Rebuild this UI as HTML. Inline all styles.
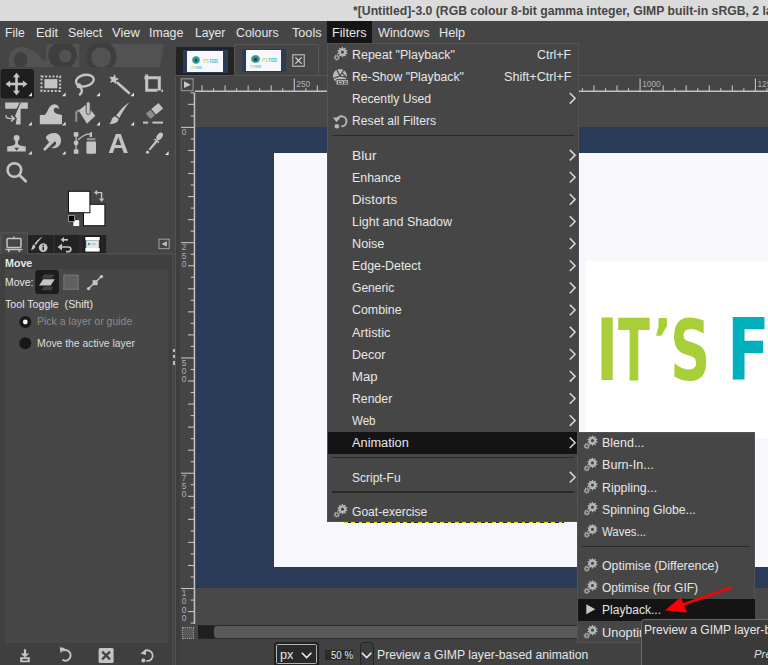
<!DOCTYPE html>
<html><head><meta charset="utf-8"><title>GIMP</title>
<style>
*{box-sizing:border-box;margin:0;padding:0}
html,body{width:768px;height:665px;overflow:hidden;background:#454545}
body{position:relative;font-family:"Liberation Sans","DejaVu Sans",sans-serif;font-size:12.3px;color:#e6e6e6}
.a{position:absolute}
.t{position:absolute;white-space:pre;transform-origin:0 50%}
.t.r{transform-origin:100% 50%}
svg{position:absolute;overflow:visible}
.rl{position:absolute;font-size:8.3px;line-height:8px;color:#adb0b4;white-space:nowrap}
</style></head><body>

<div class="a" style="left:176px;top:44px;width:592px;height:621px;background:#454545;"></div>
<div class="a" style="left:195px;top:92px;width:573px;height:534px;background:#484848;"></div>
<div class="a" style="left:176.3px;top:639px;width:592px;height:26px;background:#414141;"></div>
<div class="a" style="left:194px;top:127.4px;width:574px;height:461px;background:#2b3c59;"></div>
<div class="a" style="left:274px;top:153.3px;width:494px;height:414px;background:#f7f7fc;"></div>
<div class="a" style="left:585.5px;top:261px;width:183px;height:177px;background:#ffffff;"></div>
<div class="a" style="left:344px;top:521.6px;width:220px;height:1.6px;background:repeating-linear-gradient(90deg,#e8e000 0 3.7px,#222 3.7px 7.4px)"></div>
<div class="a" style="left:176px;top:47px;width:58.5px;height:28.5px;background:#232323;"></div>
<div class="a" style="left:234px;top:44px;width:85px;height:32px;background:#454545;border:1px solid #575757;border-bottom:none"></div>
<div class="a" style="left:176px;top:75.3px;width:592px;height:1px;background:#555555;"></div>
<div class="a" style="left:182.5px;top:50px;width:45px;height:23px;background:#2b3c59;"></div>
<div class="a" style="left:187.0px;top:50.8px;width:36px;height:21.2px;background:#f8f8fc;"></div>
<div class="a" style="left:191.9px;top:56.1px;width:8.4px;height:8.4px;border-radius:50%;background:#2e8f9a;border:1.8px solid #57b58b"></div>
<div class="a" style="left:195.1px;top:59.3px;width:2.2px;height:2.6px;border-radius:40%;background:#2a3f5a"></div>
<div class="a" style="left:202.8px;top:56.6px;font-size:5.6px;line-height:8px;height:8px;font-weight:bold;color:#a9cf38;white-space:nowrap;transform-origin:0 0;transform:scaleX(.51);letter-spacing:.3px">IT’S <span style="color:#19b5c0">FOSS</span></div>
<div class="a" style="left:190.7px;top:64.9px;font-size:4.4px;line-height:6px;height:6px;font-weight:bold;color:#a9cf38;white-space:nowrap;transform-origin:0 0;transform:scaleX(.46);letter-spacing:.3px">IT’S <span style="color:#19b5c0">FOSS</span></div>
<div class="a" style="left:241.8px;top:49px;width:44px;height:22.8px;background:#2b3c59;"></div>
<div class="a" style="left:246.3px;top:49.8px;width:35px;height:21.0px;background:#f8f8fc;"></div>
<div class="a" style="left:251.20000000000002px;top:55.1px;width:8.4px;height:8.4px;border-radius:50%;background:#2e8f9a;border:1.8px solid #57b58b"></div>
<div class="a" style="left:254.4px;top:58.3px;width:2.2px;height:2.6px;border-radius:40%;background:#2a3f5a"></div>
<div class="a" style="left:262.1px;top:55.6px;font-size:5.6px;line-height:8px;height:8px;font-weight:bold;color:#a9cf38;white-space:nowrap;transform-origin:0 0;transform:scaleX(.51);letter-spacing:.3px">IT’S <span style="color:#19b5c0">FOSS</span></div>
<div class="a" style="left:250.0px;top:63.9px;font-size:4.4px;line-height:6px;height:6px;font-weight:bold;color:#a9cf38;white-space:nowrap;transform-origin:0 0;transform:scaleX(.46);letter-spacing:.3px">IT’S <span style="color:#19b5c0">FOSS</span></div>
<svg style="left:292px;top:54px" width="13" height="13" viewBox="0 0 13 13"><rect x=".75" y=".75" width="11.5" height="11.5" fill="none" stroke="#b0b0b0" stroke-width="1.3"/><path d="M3.4 3.4L9.6 9.6M9.6 3.4L3.4 9.6" stroke="#d8d8d8" stroke-width="1.3"/></svg>
<svg style="left:0;top:0" width="768" height="665" viewBox="0 0 768 665"><rect x="195" y="90.5" width="573" height="1.5" fill="#c2c2c2"/><rect x="193.7" y="93" width="1.5" height="531" fill="#c2c2c2"/><rect x="201.48" y="85.4" width="1.1" height="5.6" fill="#c2c2c2"/><rect x="213.00" y="88.2" width="1.1" height="2.8" fill="#c2c2c2"/><rect x="224.53" y="85.4" width="1.1" height="5.6" fill="#c2c2c2"/><rect x="236.06" y="88.2" width="1.1" height="2.8" fill="#c2c2c2"/><rect x="247.59" y="85.4" width="1.1" height="5.6" fill="#c2c2c2"/><rect x="259.12" y="88.2" width="1.1" height="2.8" fill="#c2c2c2"/><rect x="270.64" y="85.4" width="1.1" height="5.6" fill="#c2c2c2"/><rect x="282.17" y="88.2" width="1.1" height="2.8" fill="#c2c2c2"/><rect x="293.70" y="78.5" width="1.1" height="12.5" fill="#c2c2c2"/><rect x="305.23" y="88.2" width="1.1" height="2.8" fill="#c2c2c2"/><rect x="316.76" y="85.4" width="1.1" height="5.6" fill="#c2c2c2"/><rect x="328.28" y="88.2" width="1.1" height="2.8" fill="#c2c2c2"/><rect x="339.81" y="85.4" width="1.1" height="5.6" fill="#c2c2c2"/><rect x="351.34" y="88.2" width="1.1" height="2.8" fill="#c2c2c2"/><rect x="362.87" y="85.4" width="1.1" height="5.6" fill="#c2c2c2"/><rect x="374.40" y="88.2" width="1.1" height="2.8" fill="#c2c2c2"/><rect x="385.92" y="85.4" width="1.1" height="5.6" fill="#c2c2c2"/><rect x="397.45" y="88.2" width="1.1" height="2.8" fill="#c2c2c2"/><rect x="408.98" y="78.5" width="1.1" height="12.5" fill="#c2c2c2"/><rect x="420.51" y="88.2" width="1.1" height="2.8" fill="#c2c2c2"/><rect x="432.04" y="85.4" width="1.1" height="5.6" fill="#c2c2c2"/><rect x="443.56" y="88.2" width="1.1" height="2.8" fill="#c2c2c2"/><rect x="455.09" y="85.4" width="1.1" height="5.6" fill="#c2c2c2"/><rect x="466.62" y="88.2" width="1.1" height="2.8" fill="#c2c2c2"/><rect x="478.15" y="85.4" width="1.1" height="5.6" fill="#c2c2c2"/><rect x="489.68" y="88.2" width="1.1" height="2.8" fill="#c2c2c2"/><rect x="501.20" y="85.4" width="1.1" height="5.6" fill="#c2c2c2"/><rect x="512.73" y="88.2" width="1.1" height="2.8" fill="#c2c2c2"/><rect x="524.26" y="78.5" width="1.1" height="12.5" fill="#c2c2c2"/><rect x="535.79" y="88.2" width="1.1" height="2.8" fill="#c2c2c2"/><rect x="547.32" y="85.4" width="1.1" height="5.6" fill="#c2c2c2"/><rect x="558.84" y="88.2" width="1.1" height="2.8" fill="#c2c2c2"/><rect x="570.37" y="85.4" width="1.1" height="5.6" fill="#c2c2c2"/><rect x="581.90" y="88.2" width="1.1" height="2.8" fill="#c2c2c2"/><rect x="593.43" y="85.4" width="1.1" height="5.6" fill="#c2c2c2"/><rect x="604.96" y="88.2" width="1.1" height="2.8" fill="#c2c2c2"/><rect x="616.48" y="85.4" width="1.1" height="5.6" fill="#c2c2c2"/><rect x="628.01" y="88.2" width="1.1" height="2.8" fill="#c2c2c2"/><rect x="639.54" y="78.5" width="1.1" height="12.5" fill="#c2c2c2"/><rect x="651.07" y="88.2" width="1.1" height="2.8" fill="#c2c2c2"/><rect x="662.60" y="85.4" width="1.1" height="5.6" fill="#c2c2c2"/><rect x="674.12" y="88.2" width="1.1" height="2.8" fill="#c2c2c2"/><rect x="685.65" y="85.4" width="1.1" height="5.6" fill="#c2c2c2"/><rect x="697.18" y="88.2" width="1.1" height="2.8" fill="#c2c2c2"/><rect x="708.71" y="85.4" width="1.1" height="5.6" fill="#c2c2c2"/><rect x="720.24" y="88.2" width="1.1" height="2.8" fill="#c2c2c2"/><rect x="731.76" y="85.4" width="1.1" height="5.6" fill="#c2c2c2"/><rect x="743.29" y="88.2" width="1.1" height="2.8" fill="#c2c2c2"/><rect x="754.82" y="78.5" width="1.1" height="12.5" fill="#c2c2c2"/><rect x="766.35" y="88.2" width="1.1" height="2.8" fill="#c2c2c2"/><rect x="190.7" y="92.27" width="3.8" height="1.1" fill="#c2c2c2"/><rect x="188" y="103.79" width="6.5" height="1.1" fill="#c2c2c2"/><rect x="190.7" y="115.32" width="3.8" height="1.1" fill="#c2c2c2"/><rect x="181" y="126.85" width="13.5" height="1.1" fill="#c2c2c2"/><rect x="190.7" y="138.38" width="3.8" height="1.1" fill="#c2c2c2"/><rect x="188" y="149.91" width="6.5" height="1.1" fill="#c2c2c2"/><rect x="190.7" y="161.43" width="3.8" height="1.1" fill="#c2c2c2"/><rect x="188" y="172.96" width="6.5" height="1.1" fill="#c2c2c2"/><rect x="190.7" y="184.49" width="3.8" height="1.1" fill="#c2c2c2"/><rect x="188" y="196.02" width="6.5" height="1.1" fill="#c2c2c2"/><rect x="190.7" y="207.55" width="3.8" height="1.1" fill="#c2c2c2"/><rect x="188" y="219.07" width="6.5" height="1.1" fill="#c2c2c2"/><rect x="190.7" y="230.60" width="3.8" height="1.1" fill="#c2c2c2"/><rect x="181" y="242.13" width="13.5" height="1.1" fill="#c2c2c2"/><rect x="190.7" y="253.66" width="3.8" height="1.1" fill="#c2c2c2"/><rect x="188" y="265.19" width="6.5" height="1.1" fill="#c2c2c2"/><rect x="190.7" y="276.71" width="3.8" height="1.1" fill="#c2c2c2"/><rect x="188" y="288.24" width="6.5" height="1.1" fill="#c2c2c2"/><rect x="190.7" y="299.77" width="3.8" height="1.1" fill="#c2c2c2"/><rect x="188" y="311.30" width="6.5" height="1.1" fill="#c2c2c2"/><rect x="190.7" y="322.83" width="3.8" height="1.1" fill="#c2c2c2"/><rect x="188" y="334.35" width="6.5" height="1.1" fill="#c2c2c2"/><rect x="190.7" y="345.88" width="3.8" height="1.1" fill="#c2c2c2"/><rect x="181" y="357.41" width="13.5" height="1.1" fill="#c2c2c2"/><rect x="190.7" y="368.94" width="3.8" height="1.1" fill="#c2c2c2"/><rect x="188" y="380.47" width="6.5" height="1.1" fill="#c2c2c2"/><rect x="190.7" y="391.99" width="3.8" height="1.1" fill="#c2c2c2"/><rect x="188" y="403.52" width="6.5" height="1.1" fill="#c2c2c2"/><rect x="190.7" y="415.05" width="3.8" height="1.1" fill="#c2c2c2"/><rect x="188" y="426.58" width="6.5" height="1.1" fill="#c2c2c2"/><rect x="190.7" y="438.11" width="3.8" height="1.1" fill="#c2c2c2"/><rect x="188" y="449.63" width="6.5" height="1.1" fill="#c2c2c2"/><rect x="190.7" y="461.16" width="3.8" height="1.1" fill="#c2c2c2"/><rect x="181" y="472.69" width="13.5" height="1.1" fill="#c2c2c2"/><rect x="190.7" y="484.22" width="3.8" height="1.1" fill="#c2c2c2"/><rect x="188" y="495.75" width="6.5" height="1.1" fill="#c2c2c2"/><rect x="190.7" y="507.27" width="3.8" height="1.1" fill="#c2c2c2"/><rect x="188" y="518.80" width="6.5" height="1.1" fill="#c2c2c2"/><rect x="190.7" y="530.33" width="3.8" height="1.1" fill="#c2c2c2"/><rect x="188" y="541.86" width="6.5" height="1.1" fill="#c2c2c2"/><rect x="190.7" y="553.39" width="3.8" height="1.1" fill="#c2c2c2"/><rect x="188" y="564.91" width="6.5" height="1.1" fill="#c2c2c2"/><rect x="190.7" y="576.44" width="3.8" height="1.1" fill="#c2c2c2"/><rect x="181" y="587.97" width="13.5" height="1.1" fill="#c2c2c2"/><rect x="190.7" y="599.50" width="3.8" height="1.1" fill="#c2c2c2"/><rect x="188" y="611.03" width="6.5" height="1.1" fill="#c2c2c2"/><rect x="190.7" y="622.55" width="3.8" height="1.1" fill="#c2c2c2"/><rect x="181.3" y="78.8" width="11.8" height="11.8" fill="none" stroke="#8c8c8c" stroke-width="1.2"/><path d="M184 81.3L190.8 84.7L184 88.1z" fill="#c8c8c8"/></svg>
<div class="rl" style="left:296.3px;top:80.2px">250</div>
<div class="rl" style="left:642.2px;top:80.2px">1000</div>
<div class="rl" style="left:757.5px;top:80.2px">125</div>
<div class="rl" style="left:181.8px;top:128.0px">0</div>
<div class="rl" style="left:181.8px;top:243.3px">2</div>
<div class="rl" style="left:181.8px;top:251.6px">5</div>
<div class="rl" style="left:181.8px;top:259.8px">0</div>
<div class="rl" style="left:181.8px;top:358.6px">5</div>
<div class="rl" style="left:181.8px;top:366.8px">0</div>
<div class="rl" style="left:181.8px;top:375.1px">0</div>
<div class="rl" style="left:181.8px;top:473.8px">7</div>
<div class="rl" style="left:181.8px;top:482.0px">5</div>
<div class="rl" style="left:181.8px;top:490.3px">0</div>
<div class="rl" style="left:181.8px;top:589.1px">1</div>
<div class="rl" style="left:181.8px;top:597.4px">0</div>
<div class="rl" style="left:181.8px;top:605.6px">0</div>
<div class="rl" style="left:181.8px;top:613.9px">0</div>
<div class="a" style="left:181.5px;top:626.5px;width:12.5px;height:12.5px;border:1px dotted #9a9a9a;background:#595959"></div>
<div class="a" style="left:197.5px;top:625.5px;width:571px;height:13px;background:#1f1f1f;"></div>
<div class="a" style="left:213.5px;top:626.3px;width:555px;height:11.7px;background:#595959;border-radius:3px 0 0 3px;"></div>
<div class="a" style="left:197.5px;top:625.3px;width:571px;height:1px;background:#2a2a2a;"></div>
<div class="a" style="left:197.5px;top:638px;width:571px;height:1px;background:#2a2a2a;"></div>
<div class="a" style="left:274.3px;top:642.3px;width:44.3px;height:26px;border-radius:3px;background:#222222"></div>
<div class="a" style="left:276.2px;top:643.9px;width:40.6px;height:20.2px;border:1px solid #b4b4b4;border-radius:1.5px;background:#2a2a2a"></div>
<div class="t" style="left:280px;top:647.00px;font-size:12.01px;line-height:16px;height:16px;transform:scaleX(1.0600);">px</div>
<svg style="left:301.2px;top:652.2px" width="12" height="7" viewBox="0 0 12 7"><path d="M0.8 0.8L5.6 5.6L10.4 0.8" fill="none" stroke="#ececec" stroke-width="1.6"/></svg>
<div class="a" style="left:319px;top:642.5px;width:40px;height:22.5px;background:#404040;"></div>
<div class="a" style="left:325.3px;top:649.6px;width:27.8px;height:10.6px;background:#2b2b2b;"></div>
<div class="t" style="left:331px;top:649.00px;font-size:10.04px;line-height:13px;height:13px;transform:scaleX(0.9614);">50 %</div>
<div class="a" style="left:359.6px;top:642.3px;width:14.8px;height:26px;border:1px solid #262626;border-radius:3px;background:#3c3c3c"></div>
<svg style="left:361.4px;top:652.2px" width="12" height="7" viewBox="0 0 12 7"><path d="M0.8 0.8L5.6 5.6L10.4 0.8" fill="none" stroke="#ececec" stroke-width="1.6"/></svg>
<div class="t" style="left:377px;top:647.00px;font-size:12.01px;line-height:16px;height:16px;transform:scaleX(1.0166);">Preview a GIMP layer-based animation</div>
<div class="a" style="left:0px;top:44px;width:173px;height:621px;background:#454545;"></div>
<div class="a" style="left:175.4px;top:76px;width:0.9px;height:589px;background:#535353;"></div>
<div class="a" style="left:176.3px;top:76px;width:3.6px;height:589px;background:#3e3e3e;"></div>
<div class="a" style="left:172.2px;top:254px;width:0.8px;height:411px;background:#505050;"></div>
<div class="a" style="left:173.1px;top:349px;width:2.1px;height:3.2px;background:#bdbdbd;"></div>
<div class="a" style="left:173.1px;top:355.2px;width:2.1px;height:3.2px;background:#bdbdbd;"></div>
<div class="a" style="left:173.1px;top:361.4px;width:2.1px;height:3.2px;background:#bdbdbd;"></div>
<svg style="left:0;top:0" width="176" height="665" viewBox="0 0 176 665">
<defs><clipPath id="wc"><rect x="0" y="43.4" width="176" height="23.5"/></clipPath></defs>
<g clip-path="url(#wc)">
<path d="M8.9 67V60C8.9 52 14.5 46.9 21.5 46.9C27 46.9 31.5 49.6 35.5 53C39.5 56.4 42.5 59.3 45.8 61.2L46.4 43.4H79.6C79.2 51 79.2 59 79.8 67z" fill="#525252"/>
<ellipse cx="20.6" cy="60" rx="6.9" ry="8" fill="#404040"/>
<ellipse cx="62.6" cy="55.3" rx="14.3" ry="13.6" fill="#3e3e3e"/>
<circle cx="65.3" cy="56" r="6.3" fill="#525252"/>
<path d="M111 43.4H163.8L160 67H111z" fill="#525252"/>
<circle cx="101.25" cy="56.6" r="15.2" fill="#3e3e3e"/>
<circle cx="101.25" cy="57.3" r="10" fill="#525252"/>
</g>
<rect x="0.6" y="69" width="33.4" height="29.6" rx="3.2" fill="#1e1e1e"/>
<path d="M32.0 92.6L32.0 96.19999999999999L28.4 96.19999999999999z" fill="#e4e4e4"/>
<path d="M65.6 92.6L65.6 96.19999999999999L62 96.19999999999999z" fill="#e4e4e4"/>
<path d="M100.0 92.6L100.0 96.19999999999999L96.4 96.19999999999999z" fill="#e4e4e4"/>
<path d="M134.0 92.6L134.0 96.19999999999999L130.4 96.19999999999999z" fill="#e4e4e4"/>
<path d="M31.8 121.8L31.8 125.39999999999999L28.2 125.39999999999999z" fill="#e4e4e4"/>
<path d="M65.6 121.8L65.6 125.39999999999999L62 125.39999999999999z" fill="#e4e4e4"/>
<path d="M100.0 121.8L100.0 125.39999999999999L96.4 125.39999999999999z" fill="#e4e4e4"/>
<path d="M134.2 121.8L134.2 125.39999999999999L130.6 125.39999999999999z" fill="#e4e4e4"/>
<path d="M31.8 151L31.8 154.6L28.2 154.6z" fill="#e4e4e4"/>
<path d="M65.6 151L65.6 154.6L62 154.6z" fill="#e4e4e4"/>
<path d="M168.6 151.3L168.6 154.9L165 154.9z" fill="#e4e4e4"/>
<g fill="#c4c4c4"><rect x="9.0" y="82.7" width="15" height="2.6"/><rect x="15.2" y="76.5" width="2.6" height="15"/>
<path d="M5.5 84l4.6 -3.6v7.2z M27.5 84l-4.6 -3.6v7.2z M16.5 72.7l-3.6 4.6h7.2z M16.5 95.3l-3.6 -4.6h7.2z"/></g>
<rect x="41.5" y="76.4" width="18.6" height="14.6" fill="none" stroke="#c4c4c4" stroke-width="2" stroke-dasharray="2 1.66"/>
<rect x="44.4" y="79.1" width="13" height="9.2" fill="#c4c4c4"/>
<g fill="none" stroke="#c4c4c4" stroke-width="2.4" stroke-linecap="round"><ellipse cx="84.9" cy="80.6" rx="9" ry="5.7" transform="rotate(-12 84.9 80.6)"/><path d="M79.5 86.6C82.6 88.2 82.6 92.6 80 94.5"/></g><circle cx="79" cy="85.8" r="2.5" fill="#c4c4c4"/>
<path d="M117.4 82.8L129 93" stroke="#c4c4c4" stroke-width="2.6" stroke-linecap="round"/>
<polygon points="115.00,74.22 115.76,77.73 119.17,78.85 116.07,80.65 116.06,84.24 113.38,81.85 109.96,82.95 111.41,79.66 109.31,76.75 112.88,77.12" fill="#c4c4c4"/>
<g fill="none" stroke="#c4c4c4" stroke-width="3"><path d="M146.7 74.4V90.2H157.6"/><path d="M144.4 77.8H159.3V90.6"/></g><rect x="161.4" y="89.6" width="1.6" height="2.4" fill="#c4c4c4"/>
<g fill="#c4c4c4"><path d="M5.2 102.4H27.8V108.8H20.6V124.6H15.2L16 117.5L14.6 116L19.6 103.5L16.5 108.8H5.2z"/></g>
<path d="M20.2 102.4L14.3 116.2L16.2 118.3L15 124.8" fill="none" stroke="#454545" stroke-width="1.1"/>
<path d="M6 115.2C6 118.6 7.5 118.6 13.5 118.6M11.2 115.6L14.2 118.6L11.2 121.6" fill="none" stroke="#c4c4c4" stroke-width="1.4"/>
<path d="M39.8 124.2V115H44.5C47.5 114 48.5 104.3 54.2 104.3C58 104.3 59.3 107.2 59 109.6C58.2 108.3 57 107.6 55.6 107.8C53.6 108.2 53.2 110.6 54.5 112.2C55.8 113.8 59 114.3 62 115V124.2z" fill="#c4c4c4"/>
<path d="M76.2 121.8V113.6C76.2 111.6 78 110.6 79.6 110.3" fill="none" stroke="#8c8c8c" stroke-width="2.2"/>
<path d="M78.6 110.6L86.2 104.4L95.4 115.8L87 123.8z" fill="#c4c4c4"/>
<rect x="86.2" y="101.8" width="4" height="12.6" rx="2" fill="#c4c4c4" stroke="#454545" stroke-width="0.9"/>
<path d="M129.2 102.4C126.4 106 121.4 113.4 119.4 118L116.2 115.6C118.8 111.4 125 104.6 129.2 102.4z" fill="#c4c4c4"/>
<path d="M115.4 116.4L118.6 118.8C118.6 122.4 114.2 124.6 109 123.8C111.6 122.6 111.2 119.8 112.4 118C113.2 116.8 114.4 116.3 115.4 116.4z" fill="#c4c4c4"/>
<rect x="-5.2" y="-3.6" width="9.4" height="7.2" transform="translate(157.6 108.4) rotate(-40)" fill="#c4c4c4"/>
<rect x="-3" y="-3.6" width="6" height="7.2" transform="translate(150.4 114.4) rotate(-40)" fill="#8c8c8c"/>
<rect x="143" y="121.6" width="5.2" height="2" fill="#c4c4c4"/><rect x="152.4" y="121.6" width="10.6" height="2" fill="#c4c4c4"/>
<circle cx="16.6" cy="138" r="3" fill="#c4c4c4"/><path d="M15.2 139.5H18V143.5C18 145 21 146 25.8 146.6V151.6H7.2V146.6C12 146 15.2 145 15.2 143.5z" fill="#c4c4c4"/><path d="M14.2 147.8H19L16.6 150.8z" fill="#454545"/>
<path d="M46.2 136.6C48 133.8 51.6 132.6 55 133C59 133.6 61.4 137 61 141.2C60.6 145 57.6 148.2 54 148.2C52.6 148.2 51.6 147.4 51.6 147.4C53.6 147.2 55.6 145.6 56 143.6C56.3 142 55.2 141.2 54.4 141.8L45.4 150.4C44.4 151.2 42.8 149.8 43.6 148.6L49.6 141.8C48 141.8 47.4 140.8 47.6 139.8C46.4 139.4 45.6 138 46.2 136.6z" fill="#c4c4c4"/>
<g fill="#c4c4c4"><rect x="73.8" y="132.2" width="4.6" height="4.4"/><rect x="73.8" y="149.4" width="4.6" height="4.4"/><circle cx="76.1" cy="143" r="2.4"/><rect x="75.5" y="134" width="1.2" height="17"/>
<path d="M77.5 139.6C81 136 85 133.4 90 133.2V132.2H92V137H89.6V134.6C85.6 134.6 82 137 78.4 140.6z"/>
<rect x="86.4" y="141.4" width="9.6" height="12.4" rx="1"/><rect x="87" y="138" width="8.4" height="2.4" fill="#8c8c8c"/></g>
<g fill="#c4c4c4"><ellipse cx="159.6" cy="136.4" rx="2.6" ry="4.2" transform="rotate(38 159.6 136.4)"/><path d="M156.4 139.4L158.4 141L150 150.4L148.6 149.2z"/><rect x="-3" y="-0.7" width="6" height="1.4" transform="translate(156.6 140.8) rotate(38)"/><circle cx="147.5" cy="152.2" r="1.6"/></g>
<circle cx="14.4" cy="170" r="6.8" fill="none" stroke="#c4c4c4" stroke-width="2.6"/><path d="M19.6 175.2L25.8 181.2" stroke="#c4c4c4" stroke-width="2.7" stroke-linecap="round"/>
<rect x="83.5" y="204.3" width="21.4" height="21.4" fill="#fff" stroke="#111" stroke-width="1"/>
<rect x="68.5" y="191.3" width="21.4" height="21.4" fill="#fff" stroke="#111" stroke-width="1"/>
<rect x="73.4" y="220.2" width="5.8" height="5.8" fill="#fff"/><rect x="68.5" y="215.5" width="6" height="6" fill="#000" stroke="#9a9a9a" stroke-width="0.9"/>
<path d="M96.6 192.6H101.6V198.8" fill="none" stroke="#c4c4c4" stroke-width="1.4"/><path d="M94 192.6L97.2 190V195.2z M101.6 202L99 198.6H104.2z" fill="#c4c4c4"/>
<rect x="27.6" y="235" width="78.6" height="18.3" fill="#232323"/>
<path d="M0.8 254V233H27.6V254" fill="#454545" stroke="#585858" stroke-width="1"/>
<rect x="53.6" y="235" width="0.8" height="18.3" fill="#3a3a3a"/><rect x="79.6" y="235" width="0.8" height="18.3" fill="#3a3a3a"/>
<path d="M27.6 254H172.2" fill="none" stroke="#585858" stroke-width="1"/>
<rect x="0.5" y="254.5" width="171.8" height="411" fill="#3f3f3f"/>
<rect x="5" y="269.2" width="163.4" height="373.8" fill="#474747"/>
<g fill="none" stroke="#c4c4c4" stroke-width="1.5"><rect x="7" y="238.6" width="14" height="9" rx="1"/><path d="M5.6 249.4H22.4M9.4 249.4L8.4 252M18.6 249.4L19.6 252M14 236.6V238.6"/></g>
<path d="M42.6 236.4C40.6 238.6 37 243 36 245L34.4 243.8C36 241.4 40 237.6 42.6 236.4z M33.8 244.6L35.4 246C35.4 248.4 33 250 30.6 249.6C32.4 248.8 32 246.8 32.6 245.6C33 245 33.4 244.6 33.8 244.6z" fill="#c4c4c4"/>
<circle cx="43.2" cy="247.6" r="4.4" fill="#c4c4c4"/><rect x="42.5" y="246.8" width="1.5" height="3.4" fill="#232323"/><rect x="42.5" y="244.8" width="1.5" height="1.3" fill="#232323"/>
<g fill="none" stroke="#c4c4c4" stroke-width="1.7"><path d="M60.6 247H68.6C71.6 247 71.6 251.6 68.6 251.6H66"/><path d="M63 239.8H68"/></g><path d="M57.6 247L62 243.4V250.6z" fill="#c4c4c4"/><path d="M60.6 239.8L64 237V242.6z" fill="#c4c4c4"/>
<rect x="84.5" y="236.6" width="16" height="15.4" fill="#0d0d0d"/><rect x="85.3" y="237" width="14.4" height="3.4" fill="#fff"/><rect x="85.3" y="248" width="14.4" height="3.6" fill="#fff"/><rect x="85.3" y="240.4" width="14.4" height="7.6" fill="#dfe9ee"/><rect x="84.8" y="240.4" width="1.4" height="7.6" fill="#2a3a5a"/><rect x="98.8" y="240.4" width="1.4" height="7.6" fill="#2a3a5a"/><circle cx="89" cy="244" r="1.2" fill="#3aa89d"/><rect x="91.5" y="243.4" width="4.5" height="1.2" fill="#9fd0a0"/>
<rect x="159" y="239.2" width="10.2" height="9.4" fill="none" stroke="#9a9a9a" stroke-width="1.1"/><path d="M166.8 241.2V246.6L161.6 243.9z" fill="#c4c4c4"/>
<rect x="35.2" y="269.9" width="23.7" height="24" rx="3" fill="#1c1c1c"/>
<path d="M39 285.5L43.2 279.2H54.8L50.6 285.5z" fill="#c4c4c4"/><path d="M41.4 290.2L43.8 286.6H53.4L51.6 290.2z" fill="#404040"/><path d="M41.6 278.4L44 274.6H54.6L52 278.4z" fill="#404040"/>
<rect x="63.8" y="275.1" width="14.4" height="14.2" fill="#606060" stroke="#858585" stroke-width="1.2" stroke-dasharray="1.5 1"/>
<path d="M88.6 288.6L101.4 276.6" stroke="#c4c4c4" stroke-width="1.4"/><rect x="92.6" y="280.2" width="5" height="5" fill="#c4c4c4"/><circle cx="88.6" cy="288.6" r="1.7" fill="#c4c4c4"/><circle cx="101.4" cy="276.6" r="1.7" fill="#c4c4c4"/>
<circle cx="25.3" cy="322" r="6" fill="#181818"/><circle cx="25.3" cy="322" r="2.4" fill="#f4f4f4"/><circle cx="25.3" cy="343.3" r="6" fill="#181818"/>
<g fill="#c4c4c4"><rect x="23.9" y="649.2" width="2.2" height="5"/><path d="M20.7 653.4H29.3L25 657.6z"/><path d="M20.2 657.2H29.8V662.2H20.2z M22.4 659H27.6V660.4H22.4z" fill-rule="evenodd"/></g>
<path d="M63 650.6A5.3 5.3 0 1 1 62.4 659.8" fill="none" stroke="#c4c4c4" stroke-width="1.8"/><path d="M59.6 647.2L65 648L60.8 653.2z" fill="#c4c4c4"/>
<rect x="98.6" y="648" width="15" height="15" rx="1.5" fill="#c4c4c4"/><path d="M102.2 651.6L110 659.4M110 651.6L102.2 659.4" stroke="#454545" stroke-width="2.3"/>
<path d="M144.2 651.4A5.3 5.3 0 1 1 146.4 660.8" fill="none" stroke="#c4c4c4" stroke-width="1.8"/><path d="M140.4 653.6L146 649.2V655z" fill="#c4c4c4"/><circle cx="143.4" cy="660.6" r="2" fill="#c4c4c4"/>
</svg>
<div class="t" style="left:5px;top:256.00px;font-size:10.5px;line-height:14px;height:14px;transform:scaleX(1.0164);font-weight:bold;">Move</div>
<div class="t" style="left:5px;top:275.00px;font-size:10.5px;line-height:14px;height:14px;transform:scaleX(0.9897);">Move:</div>
<div class="t" style="left:5px;top:297.00px;font-size:10.5px;line-height:14px;height:14px;transform:scaleX(1.0141);">Tool Toggle  (Shift)</div>
<div class="t" style="left:37px;top:314.00px;font-size:10.5px;line-height:14px;height:14px;transform:scaleX(1.0019);color:#8c8c8c;">Pick a layer or guide</div>
<div class="t" style="left:37px;top:336.00px;font-size:10.5px;line-height:14px;height:14px;transform:scaleX(0.9870);color:#dcdcdc;">Move the active layer</div>
<div class="a" style="left:0px;top:0px;width:768px;height:20.8px;background:#dbdbdb;"></div>
<div class="t" style="left:353px;top:3.00px;font-size:12.01px;line-height:16px;height:16px;transform:scaleX(1.0174);font-weight:bold;color:#464646;">*[Untitled]-3.0 (RGB colour 8-bit gamma integer, GIMP built-in sRGB, 2 la</div>
<div class="a" style="left:0px;top:20.7px;width:768px;height:22.7px;background:#454545;"></div>
<div class="a" style="left:327.2px;top:20.8px;width:45.3px;height:22.6px;background:#151515;"></div>
<div class="t" style="left:5px;top:25.00px;font-size:12.01px;line-height:16px;height:16px;transform:scaleX(1.0184);">File</div>
<div class="t" style="left:36px;top:25.00px;font-size:12.01px;line-height:16px;height:16px;transform:scaleX(1.0666);">Edit</div>
<div class="t" style="left:68px;top:25.00px;font-size:12.01px;line-height:16px;height:16px;transform:scaleX(1.0250);">Select</div>
<div class="t" style="left:112px;top:25.00px;font-size:12.01px;line-height:16px;height:16px;transform:scaleX(1.0793);">View</div>
<div class="t" style="left:149px;top:25.00px;font-size:12.01px;line-height:16px;height:16px;transform:scaleX(1.0294);">Image</div>
<div class="t" style="left:195px;top:25.00px;font-size:12.01px;line-height:16px;height:16px;transform:scaleX(1.0086);">Layer</div>
<div class="t" style="left:236px;top:25.00px;font-size:12.01px;line-height:16px;height:16px;transform:scaleX(1.0312);">Colours</div>
<div class="t" style="left:292px;top:25.00px;font-size:12.01px;line-height:16px;height:16px;transform:scaleX(1.0542);">Tools</div>
<div class="t" style="left:332px;top:25.00px;font-size:12.01px;line-height:16px;height:16px;transform:scaleX(1.0613);">Filters</div>
<div class="t" style="left:378px;top:25.00px;font-size:12.01px;line-height:16px;height:16px;transform:scaleX(1.0574);">Windows</div>
<div class="t" style="left:439px;top:25.00px;font-size:12.01px;line-height:16px;height:16px;transform:scaleX(1.0565);">Help</div>
<div class="a" style="left:327.3px;top:43.3px;width:252px;height:478.3px;background:#464646;border:1px solid #535353;"></div>
<div class="t" style="left:352px;top:47.00px;font-size:12.01px;line-height:16px;height:16px;transform:scaleX(1.0359);">Repeat "Playback"</div>
<div class="t" style="left:537px;top:47.00px;font-size:12.01px;line-height:16px;height:16px;transform:scaleX(1.0317);">Ctrl+F</div>
<div class="t" style="left:352px;top:69.00px;font-size:12.01px;line-height:16px;height:16px;transform:scaleX(1.0178);">Re-Show "Playback"</div>
<div class="t" style="left:504px;top:69.00px;font-size:12.01px;line-height:16px;height:16px;transform:scaleX(1.0518);">Shift+Ctrl+F</div>
<div class="t" style="left:352px;top:91.00px;font-size:12.01px;line-height:16px;height:16px;transform:scaleX(1.0128);">Recently Used</div>
<div class="t" style="left:352px;top:113.00px;font-size:12.01px;line-height:16px;height:16px;transform:scaleX(1.0176);">Reset all Filters</div>
<div class="a" style="left:331.90000000000003px;top:135.0px;width:242.4px;height:1.4px;background:#2a2a2a;"></div>
<div class="t" style="left:352px;top:148.00px;font-size:12.01px;line-height:16px;height:16px;transform:scaleX(1.1498);">Blur</div>
<div class="t" style="left:352px;top:170.00px;font-size:12.01px;line-height:16px;height:16px;transform:scaleX(1.0310);">Enhance</div>
<div class="t" style="left:352px;top:192.00px;font-size:12.01px;line-height:16px;height:16px;transform:scaleX(1.1085);">Distorts</div>
<div class="t" style="left:352px;top:214.00px;font-size:12.01px;line-height:16px;height:16px;transform:scaleX(1.0416);">Light and Shadow</div>
<div class="t" style="left:352px;top:236.00px;font-size:12.01px;line-height:16px;height:16px;transform:scaleX(1.0554);">Noise</div>
<div class="t" style="left:352px;top:258.00px;font-size:12.01px;line-height:16px;height:16px;transform:scaleX(1.0320);">Edge-Detect</div>
<div class="t" style="left:352px;top:280.00px;font-size:12.01px;line-height:16px;height:16px;transform:scaleX(1.0065);">Generic</div>
<div class="t" style="left:352px;top:302.00px;font-size:12.01px;line-height:16px;height:16px;transform:scaleX(1.0341);">Combine</div>
<div class="t" style="left:352px;top:325.00px;font-size:12.01px;line-height:16px;height:16px;transform:scaleX(1.0663);">Artistic</div>
<div class="t" style="left:352px;top:347.00px;font-size:12.01px;line-height:16px;height:16px;transform:scaleX(1.0400);">Decor</div>
<div class="t" style="left:352px;top:369.00px;font-size:12.01px;line-height:16px;height:16px;transform:scaleX(1.0904);">Map</div>
<div class="t" style="left:352px;top:391.00px;font-size:12.01px;line-height:16px;height:16px;transform:scaleX(1.0238);">Render</div>
<div class="t" style="left:352px;top:413.00px;font-size:12.01px;line-height:16px;height:16px;transform:scaleX(0.9623);">Web</div>
<div class="a" style="left:327.8px;top:432.01px;width:251px;height:21.9px;background:#141414;"></div>
<div class="t" style="left:352px;top:435.00px;font-size:12.01px;line-height:16px;height:16px;transform:scaleX(1.0646);">Animation</div>
<div class="a" style="left:331.90000000000003px;top:456.8px;width:242.4px;height:1.4px;background:#2a2a2a;"></div>
<div class="t" style="left:352px;top:470.00px;font-size:12.01px;line-height:16px;height:16px;transform:scaleX(0.9983);">Script-Fu</div>
<div class="a" style="left:331.90000000000003px;top:491.40000000000003px;width:242.4px;height:1.4px;background:#2a2a2a;"></div>
<div class="t" style="left:352px;top:504.00px;font-size:12.01px;line-height:16px;height:16px;transform:scaleX(1.0065);">Goat-exercise</div>
<svg style="left:0;top:0" width="768" height="665" viewBox="0 0 768 665"><path d="M347.50 53.09L347.18 54.14L345.86 53.99L345.38 54.67L345.96 55.87L345.08 56.53L344.09 55.64L343.31 55.90L343.07 57.21L341.97 57.23L341.70 55.93L340.91 55.68L339.95 56.60L339.05 55.97L339.59 54.76L339.10 54.09L337.78 54.27L337.43 53.23L338.58 52.57L338.57 51.74L337.40 51.11L337.72 50.06L339.04 50.21L339.52 49.53L338.94 48.33L339.82 47.67L340.81 48.56L341.59 48.30L341.83 46.99L342.93 46.97L343.20 48.27L343.99 48.52L344.95 47.60L345.85 48.23L345.31 49.44L345.80 50.11L347.12 49.93L347.47 50.97L346.32 51.63L346.33 52.46zM344.05 52.10A1.6 1.6 0 1 0 340.85 52.10A1.6 1.6 0 1 0 344.05 52.10z" fill="#b6b6b6" fill-rule="evenodd"/><path d="M339.99 57.71L339.82 58.55L338.77 58.48L338.44 58.96L338.91 59.91L338.20 60.38L337.51 59.58L336.93 59.70L336.59 60.69L335.75 60.52L335.82 59.47L335.34 59.14L334.39 59.61L333.92 58.90L334.72 58.21L334.60 57.63L333.61 57.29L333.78 56.45L334.83 56.52L335.16 56.04L334.69 55.09L335.40 54.62L336.09 55.42L336.67 55.30L337.01 54.31L337.85 54.48L337.78 55.53L338.26 55.86L339.21 55.39L339.68 56.10L338.88 56.79L339.00 57.37zM337.80 57.50A1.0 1.0 0 1 0 335.80 57.50A1.0 1.0 0 1 0 337.80 57.50z" fill="#a4a4a4" fill-rule="evenodd"/><g transform="translate(333 69.05)"><circle cx="6.9" cy="7" r="7" fill="#b8b8b8"/><path d="M6.9 7L3.6 0M6.9 7L11.2 0.4M6.9 7L14.5 8.6M6.9 7L0 9.4M9 3.6L13 8" stroke="#454545" stroke-width="1.1"/><rect x="3" y="10.6" width="12.4" height="5.4" rx="0.8" fill="#b8b8b8" stroke="#454545" stroke-width="1"/><rect x="5" y="12.3" width="4.8" height="2.4" fill="#454545"/><rect x="6" y="12.9" width="2.6" height="1.2" fill="#b8b8b8"/><rect x="11" y="12.3" width="3" height="1" fill="#454545"/><rect x="11" y="13.8" width="3" height="1" fill="#454545"/></g><path d="M569.8 93.0l5.3 5.3l-5.3 5.3" fill="none" stroke="#dadada" stroke-width="1.5"/><g transform="translate(333 112.0)"><path d="M3.6 8.2A5 5 0 1 1 8.4 14.3" fill="none" stroke="#b8b8b8" stroke-width="1.9"/><path d="M0 5.4L7.4 5.8L3.4 10.2z" fill="#b8b8b8"/><circle cx="3.9" cy="14.2" r="2.3" fill="#b8b8b8"/></g><path d="M569.8 149.85l5.3 5.3l-5.3 5.3" fill="none" stroke="#dadada" stroke-width="1.5"/><path d="M569.8 171.97l5.3 5.3l-5.3 5.3" fill="none" stroke="#dadada" stroke-width="1.5"/><path d="M569.8 194.09l5.3 5.3l-5.3 5.3" fill="none" stroke="#dadada" stroke-width="1.5"/><path d="M569.8 216.21l5.3 5.3l-5.3 5.3" fill="none" stroke="#dadada" stroke-width="1.5"/><path d="M569.8 238.33l5.3 5.3l-5.3 5.3" fill="none" stroke="#dadada" stroke-width="1.5"/><path d="M569.8 260.45l5.3 5.3l-5.3 5.3" fill="none" stroke="#dadada" stroke-width="1.5"/><path d="M569.8 282.57l5.3 5.3l-5.3 5.3" fill="none" stroke="#dadada" stroke-width="1.5"/><path d="M569.8 304.69l5.3 5.3l-5.3 5.3" fill="none" stroke="#dadada" stroke-width="1.5"/><path d="M569.8 326.81l5.3 5.3l-5.3 5.3" fill="none" stroke="#dadada" stroke-width="1.5"/><path d="M569.8 348.93l5.3 5.3l-5.3 5.3" fill="none" stroke="#dadada" stroke-width="1.5"/><path d="M569.8 371.05l5.3 5.3l-5.3 5.3" fill="none" stroke="#dadada" stroke-width="1.5"/><path d="M569.8 393.17l5.3 5.3l-5.3 5.3" fill="none" stroke="#dadada" stroke-width="1.5"/><path d="M569.8 415.29l5.3 5.3l-5.3 5.3" fill="none" stroke="#dadada" stroke-width="1.5"/><path d="M569.8 437.41l5.3 5.3l-5.3 5.3" fill="none" stroke="#dadada" stroke-width="1.5"/><path d="M569.8 471.9l5.3 5.3l-5.3 5.3" fill="none" stroke="#dadada" stroke-width="1.5"/><path d="M347.50 510.19L347.18 511.24L345.86 511.09L345.38 511.77L345.96 512.97L345.08 513.63L344.09 512.74L343.31 513.00L343.07 514.31L341.97 514.33L341.70 513.03L340.91 512.78L339.95 513.70L339.05 513.07L339.59 511.86L339.10 511.19L337.78 511.37L337.43 510.33L338.58 509.67L338.57 508.84L337.40 508.21L337.72 507.16L339.04 507.31L339.52 506.63L338.94 505.43L339.82 504.77L340.81 505.66L341.59 505.40L341.83 504.09L342.93 504.07L343.20 505.37L343.99 505.62L344.95 504.70L345.85 505.33L345.31 506.54L345.80 507.21L347.12 507.03L347.47 508.07L346.32 508.73L346.33 509.56zM344.05 509.20A1.6 1.6 0 1 0 340.85 509.20A1.6 1.6 0 1 0 344.05 509.20z" fill="#b6b6b6" fill-rule="evenodd"/><path d="M339.99 514.81L339.82 515.65L338.77 515.58L338.44 516.06L338.91 517.01L338.20 517.48L337.51 516.68L336.93 516.80L336.59 517.79L335.75 517.62L335.82 516.57L335.34 516.24L334.39 516.71L333.92 516.00L334.72 515.31L334.60 514.73L333.61 514.39L333.78 513.55L334.83 513.62L335.16 513.14L334.69 512.19L335.40 511.72L336.09 512.52L336.67 512.40L337.01 511.41L337.85 511.58L337.78 512.63L338.26 512.96L339.21 512.49L339.68 513.20L338.88 513.89L339.00 514.47zM337.80 514.60A1.0 1.0 0 1 0 335.80 514.60A1.0 1.0 0 1 0 337.80 514.60z" fill="#a4a4a4" fill-rule="evenodd"/></svg>
<div class="a" style="left:577px;top:431.5px;width:178.2px;height:211.2px;background:#464646;border:1px solid #535353;"></div>
<div class="t" style="left:602px;top:435.00px;font-size:12.01px;line-height:16px;height:16px;transform:scaleX(1.0395);">Blend...</div>
<div class="t" style="left:602px;top:457.00px;font-size:12.01px;line-height:16px;height:16px;transform:scaleX(1.0503);">Burn-In...</div>
<div class="t" style="left:602px;top:480.00px;font-size:12.01px;line-height:16px;height:16px;transform:scaleX(1.0323);">Rippling...</div>
<div class="t" style="left:602px;top:502.00px;font-size:12.01px;line-height:16px;height:16px;transform:scaleX(1.0177);">Spinning Globe...</div>
<div class="t" style="left:602px;top:524.00px;font-size:12.01px;line-height:16px;height:16px;transform:scaleX(0.9513);">Waves...</div>
<div class="a" style="left:581.6px;top:545.6999999999999px;width:168.6px;height:1.4px;background:#2a2a2a;"></div>
<div class="t" style="left:602px;top:558.00px;font-size:12.01px;line-height:16px;height:16px;transform:scaleX(1.0301);">Optimise (Difference)</div>
<div class="t" style="left:602px;top:580.00px;font-size:12.01px;line-height:16px;height:16px;transform:scaleX(1.0009);">Optimise (for GIF)</div>
<div class="a" style="left:577.5px;top:598.6999999999999px;width:177.2px;height:21.9px;background:#141414;"></div>
<div class="t" style="left:602px;top:602.00px;font-size:12.01px;line-height:16px;height:16px;transform:scaleX(1.0055);">Playback...</div>
<div class="t" style="left:602px;top:625.00px;font-size:12.01px;line-height:16px;height:16px;transform:scaleX(1.0677);">Unoptimise</div>
<svg style="left:0;top:0" width="768" height="665" viewBox="0 0 768 665"><path d="M597.50 441.69L597.18 442.74L595.86 442.59L595.38 443.27L595.96 444.47L595.08 445.13L594.09 444.24L593.31 444.50L593.07 445.81L591.97 445.83L591.70 444.53L590.91 444.28L589.95 445.20L589.05 444.57L589.59 443.36L589.10 442.69L587.78 442.87L587.43 441.83L588.58 441.17L588.57 440.34L587.40 439.71L587.72 438.66L589.04 438.81L589.52 438.13L588.94 436.93L589.82 436.27L590.81 437.16L591.59 436.90L591.83 435.59L592.93 435.57L593.20 436.87L593.99 437.12L594.95 436.20L595.85 436.83L595.31 438.04L595.80 438.71L597.12 438.53L597.47 439.57L596.32 440.23L596.33 441.06zM594.05 440.70A1.6 1.6 0 1 0 590.85 440.70A1.6 1.6 0 1 0 594.05 440.70z" fill="#b6b6b6" fill-rule="evenodd"/><path d="M589.99 446.31L589.82 447.15L588.77 447.08L588.44 447.56L588.91 448.51L588.20 448.98L587.51 448.18L586.93 448.30L586.59 449.29L585.75 449.12L585.82 448.07L585.34 447.74L584.39 448.21L583.92 447.50L584.72 446.81L584.60 446.23L583.61 445.89L583.78 445.05L584.83 445.12L585.16 444.64L584.69 443.69L585.40 443.22L586.09 444.02L586.67 443.90L587.01 442.91L587.85 443.08L587.78 444.13L588.26 444.46L589.21 443.99L589.68 444.70L588.88 445.39L589.00 445.97zM587.80 446.10A1.0 1.0 0 1 0 585.80 446.10A1.0 1.0 0 1 0 587.80 446.10z" fill="#a4a4a4" fill-rule="evenodd"/><path d="M597.50 463.89L597.18 464.94L595.86 464.79L595.38 465.47L595.96 466.67L595.08 467.33L594.09 466.44L593.31 466.70L593.07 468.01L591.97 468.03L591.70 466.73L590.91 466.48L589.95 467.40L589.05 466.77L589.59 465.56L589.10 464.89L587.78 465.07L587.43 464.03L588.58 463.37L588.57 462.54L587.40 461.91L587.72 460.86L589.04 461.01L589.52 460.33L588.94 459.13L589.82 458.47L590.81 459.36L591.59 459.10L591.83 457.79L592.93 457.77L593.20 459.07L593.99 459.32L594.95 458.40L595.85 459.03L595.31 460.24L595.80 460.91L597.12 460.73L597.47 461.77L596.32 462.43L596.33 463.26zM594.05 462.90A1.6 1.6 0 1 0 590.85 462.90A1.6 1.6 0 1 0 594.05 462.90z" fill="#b6b6b6" fill-rule="evenodd"/><path d="M589.99 468.51L589.82 469.35L588.77 469.28L588.44 469.76L588.91 470.71L588.20 471.18L587.51 470.38L586.93 470.50L586.59 471.49L585.75 471.32L585.82 470.27L585.34 469.94L584.39 470.41L583.92 469.70L584.72 469.01L584.60 468.43L583.61 468.09L583.78 467.25L584.83 467.32L585.16 466.84L584.69 465.89L585.40 465.42L586.09 466.22L586.67 466.10L587.01 465.11L587.85 465.28L587.78 466.33L588.26 466.66L589.21 466.19L589.68 466.90L588.88 467.59L589.00 468.17zM587.80 468.30A1.0 1.0 0 1 0 585.80 468.30A1.0 1.0 0 1 0 587.80 468.30z" fill="#a4a4a4" fill-rule="evenodd"/><path d="M597.50 486.09L597.18 487.14L595.86 486.99L595.38 487.67L595.96 488.87L595.08 489.53L594.09 488.64L593.31 488.90L593.07 490.21L591.97 490.23L591.70 488.93L590.91 488.68L589.95 489.60L589.05 488.97L589.59 487.76L589.10 487.09L587.78 487.27L587.43 486.23L588.58 485.57L588.57 484.74L587.40 484.11L587.72 483.06L589.04 483.21L589.52 482.53L588.94 481.33L589.82 480.67L590.81 481.56L591.59 481.30L591.83 479.99L592.93 479.97L593.20 481.27L593.99 481.52L594.95 480.60L595.85 481.23L595.31 482.44L595.80 483.11L597.12 482.93L597.47 483.97L596.32 484.63L596.33 485.46zM594.05 485.10A1.6 1.6 0 1 0 590.85 485.10A1.6 1.6 0 1 0 594.05 485.10z" fill="#b6b6b6" fill-rule="evenodd"/><path d="M589.99 490.71L589.82 491.55L588.77 491.48L588.44 491.96L588.91 492.91L588.20 493.38L587.51 492.58L586.93 492.70L586.59 493.69L585.75 493.52L585.82 492.47L585.34 492.14L584.39 492.61L583.92 491.90L584.72 491.21L584.60 490.63L583.61 490.29L583.78 489.45L584.83 489.52L585.16 489.04L584.69 488.09L585.40 487.62L586.09 488.42L586.67 488.30L587.01 487.31L587.85 487.48L587.78 488.53L588.26 488.86L589.21 488.39L589.68 489.10L588.88 489.79L589.00 490.37zM587.80 490.50A1.0 1.0 0 1 0 585.80 490.50A1.0 1.0 0 1 0 587.80 490.50z" fill="#a4a4a4" fill-rule="evenodd"/><path d="M597.50 508.19L597.18 509.24L595.86 509.09L595.38 509.77L595.96 510.97L595.08 511.63L594.09 510.74L593.31 511.00L593.07 512.31L591.97 512.33L591.70 511.03L590.91 510.78L589.95 511.70L589.05 511.07L589.59 509.86L589.10 509.19L587.78 509.37L587.43 508.33L588.58 507.67L588.57 506.84L587.40 506.21L587.72 505.16L589.04 505.31L589.52 504.63L588.94 503.43L589.82 502.77L590.81 503.66L591.59 503.40L591.83 502.09L592.93 502.07L593.20 503.37L593.99 503.62L594.95 502.70L595.85 503.33L595.31 504.54L595.80 505.21L597.12 505.03L597.47 506.07L596.32 506.73L596.33 507.56zM594.05 507.20A1.6 1.6 0 1 0 590.85 507.20A1.6 1.6 0 1 0 594.05 507.20z" fill="#b6b6b6" fill-rule="evenodd"/><path d="M589.99 512.81L589.82 513.65L588.77 513.58L588.44 514.06L588.91 515.01L588.20 515.48L587.51 514.68L586.93 514.80L586.59 515.79L585.75 515.62L585.82 514.57L585.34 514.24L584.39 514.71L583.92 514.00L584.72 513.31L584.60 512.73L583.61 512.39L583.78 511.55L584.83 511.62L585.16 511.14L584.69 510.19L585.40 509.72L586.09 510.52L586.67 510.40L587.01 509.41L587.85 509.58L587.78 510.63L588.26 510.96L589.21 510.49L589.68 511.20L588.88 511.89L589.00 512.47zM587.80 512.60A1.0 1.0 0 1 0 585.80 512.60A1.0 1.0 0 1 0 587.80 512.60z" fill="#a4a4a4" fill-rule="evenodd"/><path d="M597.50 530.29L597.18 531.34L595.86 531.19L595.38 531.87L595.96 533.07L595.08 533.73L594.09 532.84L593.31 533.10L593.07 534.41L591.97 534.43L591.70 533.13L590.91 532.88L589.95 533.80L589.05 533.17L589.59 531.96L589.10 531.29L587.78 531.47L587.43 530.43L588.58 529.77L588.57 528.94L587.40 528.31L587.72 527.26L589.04 527.41L589.52 526.73L588.94 525.53L589.82 524.87L590.81 525.76L591.59 525.50L591.83 524.19L592.93 524.17L593.20 525.47L593.99 525.72L594.95 524.80L595.85 525.43L595.31 526.64L595.80 527.31L597.12 527.13L597.47 528.17L596.32 528.83L596.33 529.66zM594.05 529.30A1.6 1.6 0 1 0 590.85 529.30A1.6 1.6 0 1 0 594.05 529.30z" fill="#b6b6b6" fill-rule="evenodd"/><path d="M589.99 534.91L589.82 535.75L588.77 535.68L588.44 536.16L588.91 537.11L588.20 537.58L587.51 536.78L586.93 536.90L586.59 537.89L585.75 537.72L585.82 536.67L585.34 536.34L584.39 536.81L583.92 536.10L584.72 535.41L584.60 534.83L583.61 534.49L583.78 533.65L584.83 533.72L585.16 533.24L584.69 532.29L585.40 531.82L586.09 532.62L586.67 532.50L587.01 531.51L587.85 531.68L587.78 532.73L588.26 533.06L589.21 532.59L589.68 533.30L588.88 533.99L589.00 534.57zM587.80 534.70A1.0 1.0 0 1 0 585.80 534.70A1.0 1.0 0 1 0 587.80 534.70z" fill="#a4a4a4" fill-rule="evenodd"/><path d="M597.50 564.29L597.18 565.34L595.86 565.19L595.38 565.87L595.96 567.07L595.08 567.73L594.09 566.84L593.31 567.10L593.07 568.41L591.97 568.43L591.70 567.13L590.91 566.88L589.95 567.80L589.05 567.17L589.59 565.96L589.10 565.29L587.78 565.47L587.43 564.43L588.58 563.77L588.57 562.94L587.40 562.31L587.72 561.26L589.04 561.41L589.52 560.73L588.94 559.53L589.82 558.87L590.81 559.76L591.59 559.50L591.83 558.19L592.93 558.17L593.20 559.47L593.99 559.72L594.95 558.80L595.85 559.43L595.31 560.64L595.80 561.31L597.12 561.13L597.47 562.17L596.32 562.83L596.33 563.66zM594.05 563.30A1.6 1.6 0 1 0 590.85 563.30A1.6 1.6 0 1 0 594.05 563.30z" fill="#b6b6b6" fill-rule="evenodd"/><path d="M589.99 568.91L589.82 569.75L588.77 569.68L588.44 570.16L588.91 571.11L588.20 571.58L587.51 570.78L586.93 570.90L586.59 571.89L585.75 571.72L585.82 570.67L585.34 570.34L584.39 570.81L583.92 570.10L584.72 569.41L584.60 568.83L583.61 568.49L583.78 567.65L584.83 567.72L585.16 567.24L584.69 566.29L585.40 565.82L586.09 566.62L586.67 566.50L587.01 565.51L587.85 565.68L587.78 566.73L588.26 567.06L589.21 566.59L589.68 567.30L588.88 567.99L589.00 568.57zM587.80 568.70A1.0 1.0 0 1 0 585.80 568.70A1.0 1.0 0 1 0 587.80 568.70z" fill="#a4a4a4" fill-rule="evenodd"/><path d="M597.50 586.49L597.18 587.54L595.86 587.39L595.38 588.07L595.96 589.27L595.08 589.93L594.09 589.04L593.31 589.30L593.07 590.61L591.97 590.63L591.70 589.33L590.91 589.08L589.95 590.00L589.05 589.37L589.59 588.16L589.10 587.49L587.78 587.67L587.43 586.63L588.58 585.97L588.57 585.14L587.40 584.51L587.72 583.46L589.04 583.61L589.52 582.93L588.94 581.73L589.82 581.07L590.81 581.96L591.59 581.70L591.83 580.39L592.93 580.37L593.20 581.67L593.99 581.92L594.95 581.00L595.85 581.63L595.31 582.84L595.80 583.51L597.12 583.33L597.47 584.37L596.32 585.03L596.33 585.86zM594.05 585.50A1.6 1.6 0 1 0 590.85 585.50A1.6 1.6 0 1 0 594.05 585.50z" fill="#b6b6b6" fill-rule="evenodd"/><path d="M589.99 591.11L589.82 591.95L588.77 591.88L588.44 592.36L588.91 593.31L588.20 593.78L587.51 592.98L586.93 593.10L586.59 594.09L585.75 593.92L585.82 592.87L585.34 592.54L584.39 593.01L583.92 592.30L584.72 591.61L584.60 591.03L583.61 590.69L583.78 589.85L584.83 589.92L585.16 589.44L584.69 588.49L585.40 588.02L586.09 588.82L586.67 588.70L587.01 587.71L587.85 587.88L587.78 588.93L588.26 589.26L589.21 588.79L589.68 589.50L588.88 590.19L589.00 590.77zM587.80 590.90A1.0 1.0 0 1 0 585.80 590.90A1.0 1.0 0 1 0 587.80 590.90z" fill="#a4a4a4" fill-rule="evenodd"/><path d="M586.3 604.2L595.3 609.2L586.3 614.2z" fill="#c8c8c8"/><path d="M597.50 631.19L597.18 632.24L595.86 632.09L595.38 632.77L595.96 633.97L595.08 634.63L594.09 633.74L593.31 634.00L593.07 635.31L591.97 635.33L591.70 634.03L590.91 633.78L589.95 634.70L589.05 634.07L589.59 632.86L589.10 632.19L587.78 632.37L587.43 631.33L588.58 630.67L588.57 629.84L587.40 629.21L587.72 628.16L589.04 628.31L589.52 627.63L588.94 626.43L589.82 625.77L590.81 626.66L591.59 626.40L591.83 625.09L592.93 625.07L593.20 626.37L593.99 626.62L594.95 625.70L595.85 626.33L595.31 627.54L595.80 628.21L597.12 628.03L597.47 629.07L596.32 629.73L596.33 630.56zM594.05 630.20A1.6 1.6 0 1 0 590.85 630.20A1.6 1.6 0 1 0 594.05 630.20z" fill="#b6b6b6" fill-rule="evenodd"/><path d="M589.99 635.81L589.82 636.65L588.77 636.58L588.44 637.06L588.91 638.01L588.20 638.48L587.51 637.68L586.93 637.80L586.59 638.79L585.75 638.62L585.82 637.57L585.34 637.24L584.39 637.71L583.92 637.00L584.72 636.31L584.60 635.73L583.61 635.39L583.78 634.55L584.83 634.62L585.16 634.14L584.69 633.19L585.40 632.72L586.09 633.52L586.67 633.40L587.01 632.41L587.85 632.58L587.78 633.63L588.26 633.96L589.21 633.49L589.68 634.20L588.88 634.89L589.00 635.47zM587.80 635.60A1.0 1.0 0 1 0 585.80 635.60A1.0 1.0 0 1 0 587.80 635.60z" fill="#a4a4a4" fill-rule="evenodd"/></svg>
<svg style="left:0;top:0" width="768" height="665" viewBox="0 0 768 665"><path d="M730.8 587.6L682 605" stroke="#fb0007" stroke-width="2.7" stroke-linecap="round"/><path d="M665 610.6L680.8 597L687.2 612.6z" fill="#fb0007"/></svg>
<div class="a" style="left:641.3px;top:619.3px;width:135px;height:55px;background:#3a3a3a;border:1px solid #6a6a6a;border-radius:3.5px"></div>
<div class="t" style="left:644px;top:622.00px;font-size:12.01px;line-height:16px;height:16px;transform:scaleX(1.0048);">Preview a GIMP layer-b</div>
<div class="t" style="left:754px;top:646.50px;font-size:11.19px;line-height:15px;height:15px;transform:scaleX(1.0178);font-style:italic;color:#dcdcdc;">Pre</div>
<div class="a" style="left:596.12px;top:300.70px;font-family:'DejaVu Sans','Liberation Sans',sans-serif;font-weight:bold;font-size:84.64px;line-height:100px;height:100px;color:#a9cf38;transform-origin:0 0;transform:scaleX(0.7039);will-change:transform;white-space:nowrap">I</div>
<div class="a" style="left:618.17px;top:300.70px;font-family:'DejaVu Sans','Liberation Sans',sans-serif;font-weight:bold;font-size:84.64px;line-height:100px;height:100px;color:#a9cf38;transform-origin:0 0;transform:scaleX(0.5521);will-change:transform;white-space:nowrap">T</div>
<div class="a" style="left:653.36px;top:290.80px;font-family:'DejaVu Sans','Liberation Sans',sans-serif;font-weight:bold;font-size:57.60px;line-height:100px;height:100px;color:#a9cf38;transform-origin:0 0;transform:scaleX(0.8640);will-change:transform;white-space:nowrap">’</div>
<div class="a" style="left:670.37px;top:302.10px;font-family:'DejaVu Sans','Liberation Sans',sans-serif;font-weight:bold;font-size:83.37px;line-height:100px;height:100px;color:#a9cf38;transform-origin:0 0;transform:scaleX(0.6717);will-change:transform;white-space:nowrap">S</div>
<div class="a" style="left:726.87px;top:300.70px;font-family:'DejaVu Sans','Liberation Sans',sans-serif;font-weight:bold;font-size:84.64px;line-height:100px;height:100px;color:#00b0bd;transform-origin:0 0;transform:scaleX(0.7364);will-change:transform;white-space:nowrap">F</div>
<div class="a" style="left:108.32px;top:126.11px;font-weight:bold;font-size:28.5px;line-height:34px;height:34px;color:#c4c4c4;transform-origin:0 0;transform:scaleX(0.98);will-change:transform">A</div>
</body></html>
